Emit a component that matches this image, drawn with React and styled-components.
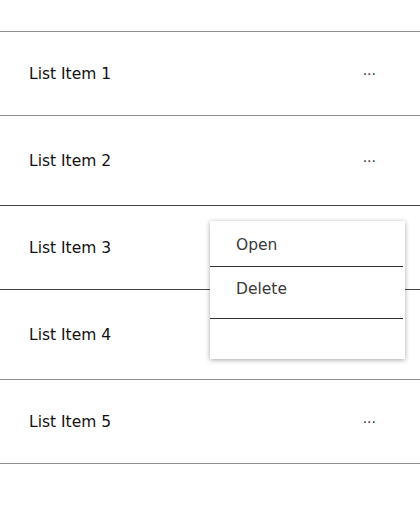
import React from 'react';
import styled, { createGlobalStyle } from 'styled-components';

const GlobalStyle = createGlobalStyle`
  html, body {
    margin: 0;
    padding: 0;
    background: #ffffff;
    font-family: "DejaVu Sans", Verdana, sans-serif;
  }
`;

const items = ['List Item 1', 'List Item 2', 'List Item 3', 'List Item 4', 'List Item 5'];

export default function App() {
  const openIndex = 2;

  return (
    <>
      <GlobalStyle />
      <Page>
        <List>
          {items.map((label, i) => (
            <Row key={label} $tall={i % 2 === 1} $active={i === openIndex} $beforeActive={i === openIndex - 1}>
              <Label>{label}</Label>
              <More>···</More>
              {i === openIndex && (
                <Menu>
                  <MenuItem>Open</MenuItem>
                  <MenuItem $tall>Delete</MenuItem>
                  <MenuSpacer />
                </Menu>
              )}
            </Row>
          ))}
        </List>
      </Page>
    </>
  );
}

const Page = styled.div`
  width: 420px;
  height: 525px;
  padding-top: 31px;
  box-sizing: border-box;
  overflow: hidden;
`;

const List = styled.ul`
  list-style: none;
  margin: 0;
  padding: 0;
  border-top: 1px solid #8f8f8f;
`;

const Row = styled.li`
  position: relative;
  display: flex;
  align-items: center;
  justify-content: space-between;
  height: ${({ $tall }) => ($tall ? '89px' : '83px')};
  padding: 0 44px 0 29px;
  border-bottom: 1px solid ${({ $active }) => ($active ? '#444444' : '#8f8f8f')};
  border-top: ${({ $active }) => ($active ? '1px solid #444444' : 'none')};
  ${({ $beforeActive }) => $beforeActive && 'border-bottom: none;'}
  color: #111111;
`;

const Label = styled.span`
  font-size: 15.5px;
`;

const More = styled.span`
  font-size: 14px;
  color: #333333;
`;

const Menu = styled.div`
  position: absolute;
  z-index: 10;
  top: 15px;
  left: 210px;
  width: 195px;
  background: #ffffff;
  box-shadow: 0 1px 5px rgba(0, 0, 0, 0.35);
  display: flex;
  flex-direction: column;
`;

const MenuItem = styled.div`
  display: flex;
  align-items: center;
  height: ${({ $tall }) => ($tall ? '52px' : '46px')};
  padding: ${({ $tall }) => ($tall ? '0 0 7px 26px' : '3px 0 0 26px')};
  box-sizing: border-box;
  margin-right: 2px;
  border-bottom: 1px solid #333333;
  font-size: 15.5px;
  color: #3a3a3a;
`;

const MenuSpacer = styled.div`
  height: 40px;
`;
